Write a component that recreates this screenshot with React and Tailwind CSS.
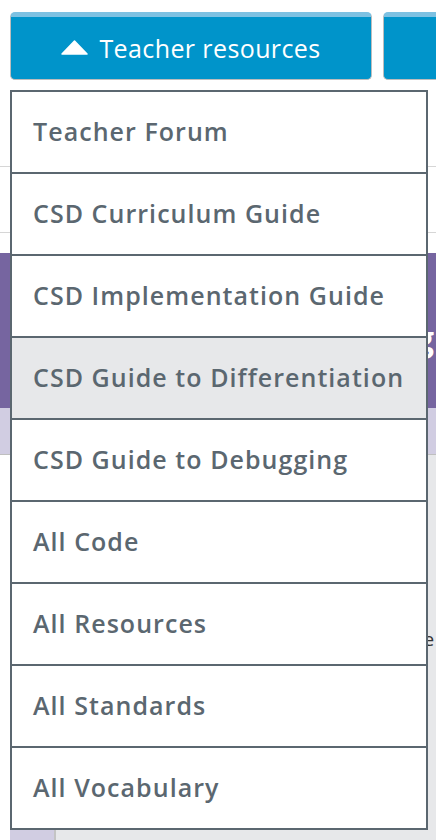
import React from "react";

const items = [
  "Teacher Forum",
  "CSD Curriculum Guide",
  "CSD Implementation Guide",
  "CSD Guide to Differentiation",
  "CSD Guide to Debugging",
  "All Code",
  "All Resources",
  "All Standards",
  "All Vocabulary",
];

function Btn({ children, className = "" }) {
  return (
    <div
      className={
        "h-[68px] shrink-0 rounded-[5px] border border-[#bdbdbd] bg-[#0094ca] border-t-[5px] border-t-[#7dc1e2] flex items-center justify-center gap-[11px] " +
        className
      }
    >
      {children}
    </div>
  );
}

export default function App() {
  return (
    <div
      className="relative w-[436px] h-[840px] overflow-hidden bg-white"
      style={{ fontFamily: '"Open Sans", "Liberation Sans", sans-serif' }}
    >
      {/* Top buttons */}
      <div className="flex gap-[11px] pl-[10px] pt-[12px]">
        <Btn className="w-[362px]">
          <svg width="27" height="15" viewBox="0 0 27 15" className="mb-[2px]">
            <path d="M13.5 1 L26 14 L1 14 Z" fill="white" stroke="white" strokeWidth="1.5" strokeLinejoin="round" />
          </svg>
          <span className="text-white text-[25px] leading-none tracking-[0.4px]">Teacher resources</span>
        </Btn>
        <Btn className="w-[120px]" />
      </div>

      {/* Background page content */}
      <div className="mt-[86px] border-t border-[#d6d6d6] h-[66px]" />
      <div className="border-t border-[#d6d6d6] h-[21px]" />
      <div className="h-[155px] bg-[#7665a0] flex items-center justify-end">
        <span className="text-white font-bold text-[34px] leading-none mr-[2px] mt-[14px]">Programming</span>
      </div>
      <div className="h-[47px] bg-[#d1cde2] border-b border-[#bfbfbf]" />
      <div className="ml-[10px] flex h-[400px] bg-[#e7e8ea]">
        <div className="w-[46px] shrink-0 bg-[#d1cde2] border-r-2 border-[#c4c4c4]" />
        <div className="flex-1 min-w-0 pl-[14px] pt-[36px] text-[#333]">
          <div className="font-bold text-[30px] leading-[36px]">Lesson Overview</div>
          <div className="font-bold italic text-[24px] leading-[30px] mt-[50px]">Students will review</div>
          <div className="text-[19px] leading-[29px] mt-[18px]">
            In this lesson students will go beyond the basic steps and now will learn how to keep the program simple and ready for the next lesson in this unit.
          </div>
        </div>
      </div>

      {/* Dropdown menu */}
      <div className="absolute left-[10px] top-[90px] w-[418px] border-2 border-[#5b6770] bg-white">
        {items.map((t, i) => (
          <div
            key={t}
            className={
              "h-[80px] flex items-center pl-[21px] text-[#5b6770] font-semibold text-[25px] tracking-[1.05px] " +
              (i > 0 ? "border-t-2 border-[#5b6770] h-[82px] " : "") +
              (i === 3 ? "bg-[#e7e8ea]" : "bg-white")
            }
          >
            {t}
          </div>
        ))}
      </div>
    </div>
  );
}
